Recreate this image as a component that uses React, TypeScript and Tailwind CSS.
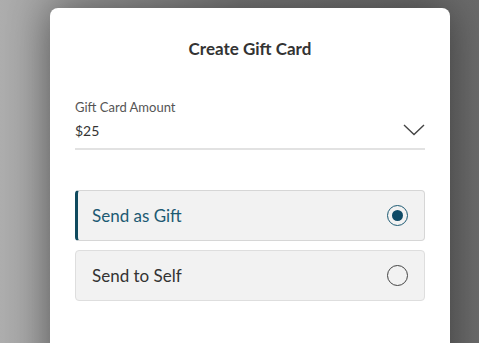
import { useState } from 'react';

type Option = { id: string; label: string };

const options: Option[] = [
  { id: 'gift', label: 'Send as Gift' },
  { id: 'self', label: 'Send to Self' },
];

export default function App() {
  const [selected, setSelected] = useState('gift');

  return (
    <div className="flex h-[343px] w-full overflow-hidden bg-gradient-to-r from-[#adadad] via-[#7a7a7a] to-[#6a6a6a] pl-[50px] pt-[8px] font-['Lato',sans-serif]">
      <div className="h-[380px] w-[400px] shrink-0 rounded-lg bg-white px-[25px] pt-[31px] shadow-[0_0_40px_rgba(0,0,0,0.45)]">
        <h1 className="text-center text-[17px] font-bold leading-[20px] text-[#333]">
          Create Gift Card
        </h1>

        <div className="mt-[40px]">
          <label className="block text-[13px] leading-[16px] text-[#555]">
            Gift Card Amount
          </label>
          <div className="mt-[7px] flex items-center justify-between border-b-2 border-[#e2e2e2] pb-[8px]">
            <span className="text-[14px] leading-[18px] text-[#333]">$25</span>
            <svg
              width="22"
              height="12"
              viewBox="0 0 22 12"
              fill="none"
              stroke="#444"
              strokeWidth="1.4"
              className="-mt-[3px]">
              <path d="M1 1 L11 10.5 L21 1" />
            </svg>
          </div>
        </div>

        <div className="mt-[40px] flex flex-col gap-[9px]">
          {options.map((o) => {
            const active = selected === o.id;
            return (
              <button
                key={o.id}
                type="button"
                onClick={() => setSelected(o.id)}
                className={
                  active
                    ? 'flex h-[51px] items-center justify-between rounded border border-[#d6d6d6] border-l-[3px] border-l-[#0f4a5e] bg-[#f2f2f2] pl-[14px] pr-[16px] text-left'
                    : 'flex h-[51px] items-center justify-between rounded border border-[#dedede] bg-[#f2f2f2] pl-[16px] pr-[16px] text-left'
                }>
                <span
                  className={
                    active
                      ? 'text-[17px] leading-[20px] text-[#1d5a72]'
                      : 'text-[17px] leading-[20px] text-[#333]'
                  }>
                  {o.label}
                </span>
                {active ? (
                  <span className="flex h-[21px] w-[21px] items-center justify-center rounded-full border-[1.5px] border-[#1d5a72]">
                    <span className="h-[11px] w-[11px] rounded-full bg-[#0f4a66]" />
                  </span>
                ) : (
                  <span className="h-[21px] w-[21px] rounded-full border-[1.5px] border-[#444]" />
                )}
              </button>
            );
          })}
        </div>
      </div>
    </div>
  );
}
